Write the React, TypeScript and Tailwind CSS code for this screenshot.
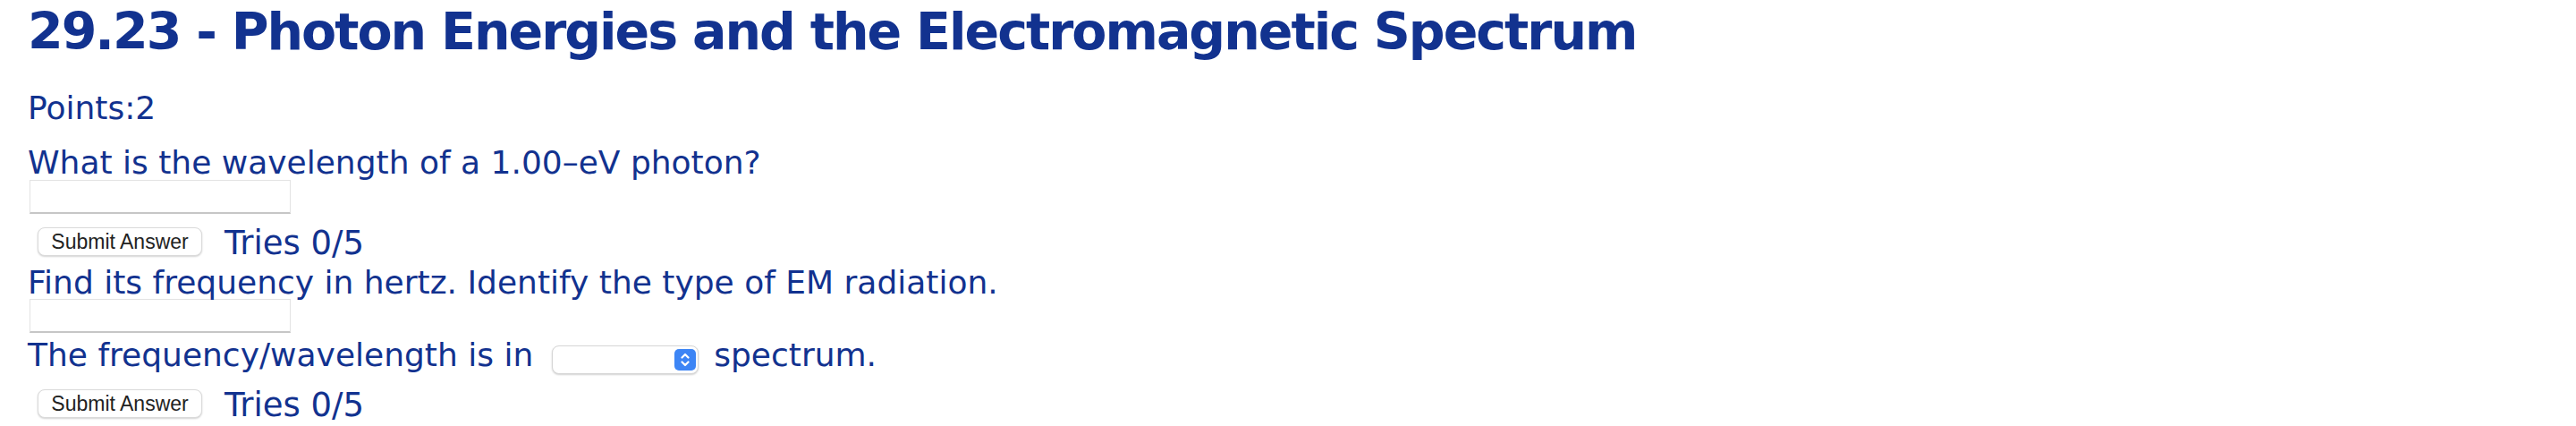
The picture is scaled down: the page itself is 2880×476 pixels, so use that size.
const body = "font-['Verdana','DejaVu_Sans',sans-serif]";

const SubmitRow = ({ className }: { className: string }) => (
  <div className={`flex items-start h-[32px] ${className}`}>
    <button className="ml-[11px] h-[32px] w-[184px] rounded-[8px] border border-[#dadada] bg-white shadow-[0_1px_2px_rgba(0,0,0,0.18)] text-[23px] leading-none text-[#222] font-['Helvetica','Liberation_Sans',sans-serif]">
      Submit Answer
    </button>
    <span className={`ml-[25px] text-[37px] leading-[36px] whitespace-nowrap ${body}`}>Tries 0/5</span>
  </div>
);

const AnswerBox = ({ className }: { className: string }) => (
  <div className={`h-[38px] w-[292px] ml-[2px] border border-[#e3e3e3] border-b-[#c6c6c6] border-b-2 bg-white ${className}`} />
);

export default function App() {
  return (
    <div className="w-[2880px] h-[476px] bg-white text-[#12328f] px-[31px] pt-[2px] overflow-hidden">
      <h1 className={`text-[57px] leading-[66px] font-bold tracking-[-2px] whitespace-nowrap ${body}`}>
        29.23 - Photon Energies and the Electromagnetic Spectrum
      </h1>
      <div className={`mt-[32px] text-[36px] leading-[42px] ${body}`}>Points:2</div>
      <div className={`mt-[20px] text-[36px] leading-[40px] ${body}`}>
        What is the wavelength of a 1.00–eV photon?
      </div>
      <AnswerBox className="-mt-[1px]" />
      <SubmitRow className="mt-[15px]" />
      <div className={`mt-[10px] text-[36px] leading-[40px] ${body}`}>
        Find its frequency in hertz. Identify the type of EM radiation.
      </div>
      <AnswerBox className="-mt-[2px]" />
      <div className={`mt-[5px] flex items-start text-[36px] leading-[40px] ${body}`}>
        <span>The frequency/wavelength is in</span>
        <div className="ml-[21px] mr-[17px] mt-[9px] h-[32px] w-[164px] rounded-[8px] border border-[#d6d6d6] bg-white shadow-[0_1px_2px_rgba(0,0,0,0.18)] flex items-start justify-end pr-[2px] pt-[3px]">
          <div className="h-[24px] w-[24px] rounded-[5px] bg-[#3d85f5] flex items-center justify-center">
            <svg width="12" height="18" viewBox="0 0 12 18" fill="none" stroke="white" strokeWidth="2.2" strokeLinecap="round" strokeLinejoin="round">
              <path d="M2.5 6.5 6 3l3.5 3.5" />
              <path d="M2.5 11.5 6 15l3.5-3.5" />
            </svg>
          </div>
        </div>
        <span>spectrum.</span>
      </div>
      <SubmitRow className="mt-[17px]" />
    </div>
  );
}
